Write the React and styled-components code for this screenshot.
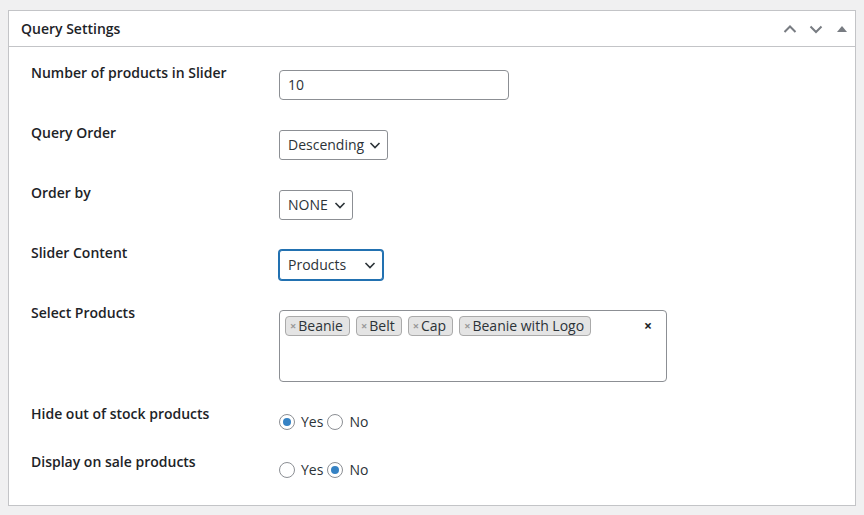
import React from 'react';
import styled, { createGlobalStyle } from 'styled-components';

const GlobalStyle = createGlobalStyle`
  html, body {
    margin: 0;
    padding: 0;
    background: #f0f0f1;
  }
  body {
    font-family: "Open Sans", "Liberation Sans", sans-serif;
    color: #1d2327;
    font-size: 14px;
  }
  * { box-sizing: border-box; }
`;

const Page = styled.div`
  padding: 10px 8px 9px 8px;
`;

const Postbox = styled.div`
  width: 848px;
  background: #fff;
  border: 1px solid #c3c4c7;
`;

const Header = styled.div`
  height: 36px;
  border-bottom: 1px solid #c3c4c7;
  display: flex;
  align-items: center;
  justify-content: space-between;
  padding: 0 3px 0 12px;
`;

const Title = styled.h2`
  margin: 0;
  font-size: 14px;
  font-weight: 600;
  line-height: 1.4;
`;

const HandleActions = styled.div`
  display: flex;
  align-items: center;
  gap: 6px;
`;

const HandleButton = styled.span`
  width: 20px;
  height: 20px;
  display: flex;
  align-items: center;
  justify-content: center;
  color: #787c82;
`;

const Body = styled.div`
  padding: 8px 12px 13px 22px;
`;

const Row = styled.div`
  display: grid;
  grid-template-columns: 248px 1fr;
  align-items: start;
  min-height: ${(p) => p.h || 60}px;
`;

const Label = styled.div`
  font-weight: 600;
  line-height: 1.3;
  padding-top: 9px;
`;

const Control = styled.div`
  padding-top: ${(p) => (p.top !== undefined ? p.top : 15)}px;
  display: flex;
  align-items: center;
`;

const TextInput = styled.input`
  width: 230px;
  height: 30px;
  border: 1px solid #8c8f94;
  border-radius: 4px;
  padding: 0 8px 1px;
  font-family: inherit;
  font-size: 14px;
  color: #2c3338;
  background: #fff;
  outline: none;
`;

const SelectBox = styled.div`
  height: 30px;
  min-width: ${(p) => p.w}px;
  border: 1px solid ${(p) => (p.focus ? '#2271b1' : '#8c8f94')};
  box-shadow: ${(p) => (p.focus ? '0 0 0 1px #2271b1' : 'none')};
  border-radius: 3px;
  padding: 0 5px 1px 8px;
  display: flex;
  align-items: center;
  justify-content: space-between;
  gap: 4px;
  color: #2c3338;
  font-size: 14px;
  background: #fff;
`;

const Multi = styled.div`
  width: 388px;
  height: 72px;
  border: 1px solid #8c8f94;
  border-radius: 4px;
  padding: 5px 14px 0 5px;
  display: flex;
  align-items: flex-start;
  justify-content: space-between;
`;

const Tags = styled.div`
  display: flex;
  flex-wrap: wrap;
  gap: 6px;
`;

const Tag = styled.span`
  height: 20px;
  border: 1px solid #aaa;
  border-radius: 4px;
  background: #e4e4e4;
  padding: 0 6px 1px 4px;
  display: flex;
  align-items: center;
  gap: 2px;
  font-size: 14px;
  color: #2c3338;
`;

const TagRemove = styled.span`
  color: #999;
  font-weight: 700;
  font-size: 11px;
  line-height: 1;
`;

const Clear = styled.span`
  font-weight: 700;
  font-size: 14px;
  line-height: 1;
  color: #1d2327;
  margin-top: 3px;
`;

const RadioGroup = styled.div`
  display: flex;
  align-items: center;
`;

const RadioLabel = styled.label`
  display: flex;
  align-items: center;
  gap: 6px;
  color: #2c3338;
  font-size: 14px;
  margin-right: ${(p) => p.mr || 0}px;
`;

const RadioCircle = styled.span`
  width: 16px;
  height: 16px;
  border: 1px solid #8c8f94;
  border-radius: 50%;
  background: #fff;
  display: flex;
  align-items: center;
  justify-content: center;
  &::after {
    content: '';
    width: 8px;
    height: 8px;
    border-radius: 50%;
    background: ${(p) => (p.checked ? '#3582c4' : 'transparent')};
  }
`;

const Chevron = ({ up }) => (
  <svg width="16" height="16" viewBox="0 0 16 16" fill="none">
    <path
      d={up ? 'M2.5 11 L8 5.5 L13.5 11' : 'M2.5 5.5 L8 11 L13.5 5.5'}
      stroke="currentColor"
      strokeWidth="2"
    />
  </svg>
);

const Caret = () => (
  <svg width="14" height="14" viewBox="0 0 14 14">
    <path d="M2.5 5 L7 9.5 L11.5 5" stroke="#2c3338" strokeWidth="1.6" fill="none" />
  </svg>
);

const Triangle = () => (
  <svg width="14" height="14" viewBox="0 0 14 14">
    <path d="M2 10 L7 4 L12 10 Z" fill="currentColor" />
  </svg>
);

const Radio = ({ checked, children, mr }) => (
  <RadioLabel mr={mr}>
    <RadioCircle checked={checked} />
    {children}
  </RadioLabel>
);

const products = ['Beanie', 'Belt', 'Cap', 'Beanie with Logo'];

export default function App() {
  return (
    <Page>
      <GlobalStyle />
      <Postbox>
        <Header>
          <Title>Query Settings</Title>
          <HandleActions>
            <HandleButton>
              <Chevron up />
            </HandleButton>
            <HandleButton>
              <Chevron />
            </HandleButton>
            <HandleButton>
              <Triangle />
            </HandleButton>
          </HandleActions>
        </Header>
        <Body>
          <Row>
            <Label>Number of products in Slider</Label>
            <Control>
              <TextInput defaultValue="10" />
            </Control>
          </Row>
          <Row>
            <Label>Query Order</Label>
            <Control>
              <SelectBox w={109}>
                Descending
                <Caret />
              </SelectBox>
            </Control>
          </Row>
          <Row>
            <Label>Order by</Label>
            <Control>
              <SelectBox w={74}>
                NONE
                <Caret />
              </SelectBox>
            </Control>
          </Row>
          <Row>
            <Label>Slider Content</Label>
            <Control>
              <SelectBox w={104} focus>
                Products
                <Caret />
              </SelectBox>
            </Control>
          </Row>
          <Row h={101}>
            <Label>Select Products</Label>
            <Control>
              <Multi>
                <Tags>
                  {products.map((p) => (
                    <Tag key={p}>
                      <TagRemove>×</TagRemove>
                      {p}
                    </Tag>
                  ))}
                </Tags>
                <Clear>×</Clear>
              </Multi>
            </Control>
          </Row>
          <Row h={48}>
            <Label>Hide out of stock products</Label>
            <Control top={16}>
              <RadioGroup>
                <Radio checked mr={4}>Yes</Radio>
                <Radio>No</Radio>
              </RadioGroup>
            </Control>
          </Row>
          <Row h={48}>
            <Label>Display on sale products</Label>
            <Control top={16}>
              <RadioGroup>
                <Radio mr={4}>Yes</Radio>
                <Radio checked>No</Radio>
              </RadioGroup>
            </Control>
          </Row>
        </Body>
      </Postbox>
    </Page>
  );
}
